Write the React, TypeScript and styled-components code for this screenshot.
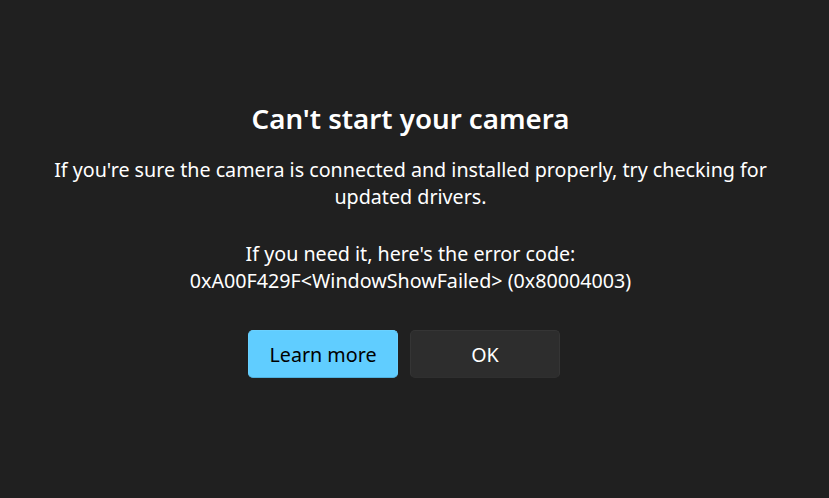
import React from 'react'
import styled, { createGlobalStyle } from 'styled-components'

const GlobalStyle = createGlobalStyle`
    html, body {
        margin: 0;
        padding: 0;
        background: #202020;
    }
`

// Styled Components
const Page = styled.div`
    width: 829px;
    height: 498px;
    box-sizing: border-box;
    padding: 97px 8px 0 0;
    display: flex;
    flex-direction: column;
    align-items: center;
    background: #202020;
    font-family: 'Noto Sans', 'Open Sans', sans-serif;
    color: #ffffff;
`

const Title = styled.h1`
    margin: 0;
    font-size: 27.7px;
    line-height: 42px;
    font-weight: 600;
`

const Message = styled.p`
    margin: 17px 0 0;
    max-width: 760px;
    font-size: 19.7px;
    line-height: 27px;
    text-align: center;
    color: #ffffff;

    & + & {
        margin-top: 30px;
    }
`

const Actions = styled.div`
    display: flex;
    gap: 12px;
    margin: 36px 13px 0 0;
`

const Button = styled.button<{ $accent?: boolean }>`
    width: 150px;
    height: 48px;
    box-sizing: border-box;
    border-radius: 5px;
    font-family: inherit;
    font-size: 19.7px;
    cursor: pointer;
    background: ${(p) => (p.$accent ? '#60cdff' : '#2d2d2d')};
    color: ${(p) => (p.$accent ? '#000000' : '#ffffff')};
    border: 1px solid ${(p) => (p.$accent ? '#6ad1ff' : '#353535')};
    border-bottom-color: ${(p) => (p.$accent ? '#4fb0dd' : '#2f2f2f')};
`

const App: React.FC = (): JSX.Element => {
    return (
        <>
            <GlobalStyle />
            <Page>
                <Title>Can't start your camera</Title>
                <Message>
                    If you're sure the camera is connected and installed properly, try checking for updated drivers.
                </Message>
                <Message>
                    If you need it, here's the error code:
                    <br />
                    0xA00F429F&lt;WindowShowFailed&gt; (0x80004003)
                </Message>
                <Actions>
                    <Button $accent>Learn more</Button>
                    <Button>OK</Button>
                </Actions>
            </Page>
        </>
    )
}

export default App
